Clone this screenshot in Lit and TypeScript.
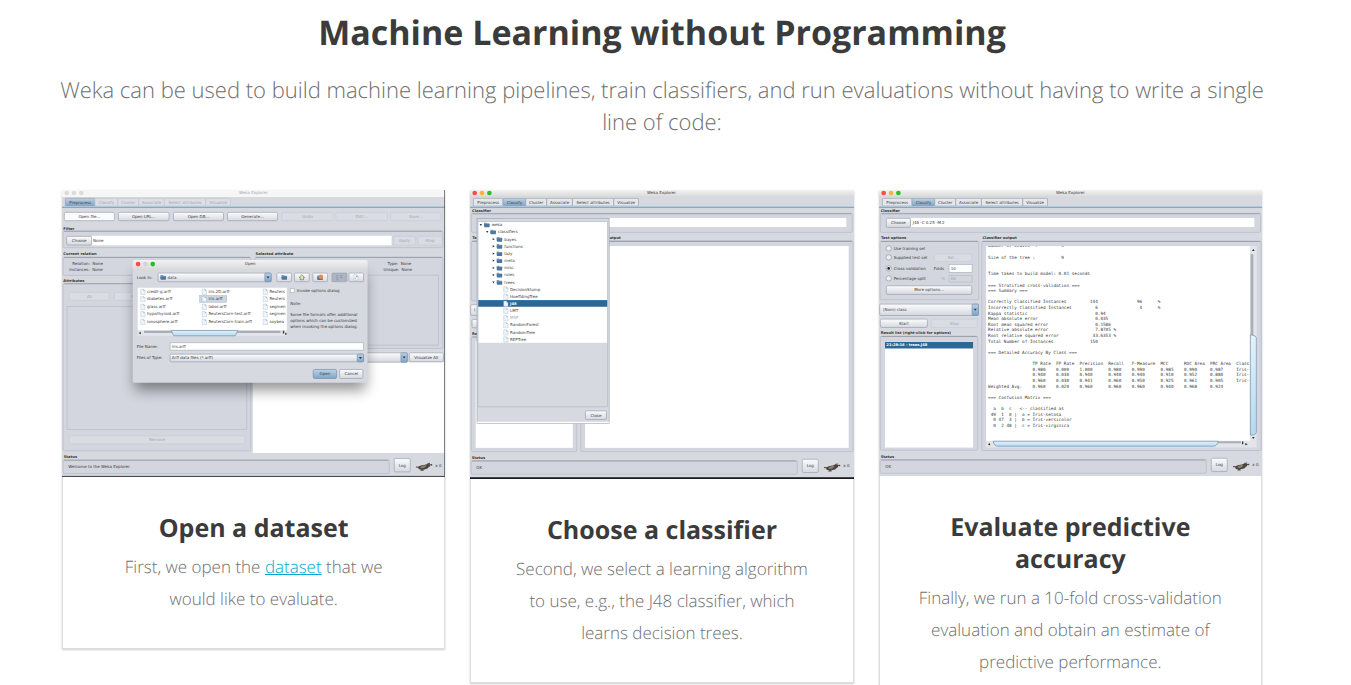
import { LitElement, html, svg, css } from "lit";
import { customElement } from "lit/decorators.js";

// Drawing helpers. y is the vertical middle of the text line.
const t = (x: number, y: number, s: string, cls = "") =>
  svg`<text class=${"t " + cls} x=${x} y=${y + 4}>${s}</text>`;

const box = (x: number, y: number, x2: number, y2: number, cls: string, r = 0) =>
  svg`<rect class=${cls} x=${x} y=${y} width=${x2 - x} height=${y2 - y} rx=${r}></rect>`;

const group = (x: number, y: number, x2: number, y2: number) => svg`
  ${box(x, y, x2, y2, "group", 4)}
  <path class="group-top" d=${`M${x + 3} ${y + 1}H${x2 - 3}`}></path>`;

const btn = (x: number, y: number, x2: number, y2: number, s: string, cls = "") => svg`
  ${box(x, y, x2, y2, "btn " + cls, 4)}
  ${t((x + x2) / 2, (y + y2) / 2, s, "mid " + (cls === "off" ? "dim" : ""))}`;

const combo = (x: number, y: number, x2: number, y2: number) => svg`
  ${box(x, y, x2, y2, "btn", 3)}
  ${box(x2 - 19, y, x2, y2, "arrow-box", 3)}
  <path class="ink" d=${`M${x2 - 14} ${(y + y2) / 2 - 3}h9l-4.5 6z`}></path>`;

const folder = (x: number, y: number) => svg`
  <path class="folder-back" d=${`M${x - 8} ${y - 7}h7l2 2h7v10h-16z`}></path>
  <path class="folder" d=${`M${x - 8} ${y - 3}h17l-1 10h-15z`}></path>`;

const file = (x: number, y: number) => svg`
  <path class="file" d=${`M${x - 6} ${y - 8}h8l5 5v11h-13z`}></path>
  <path class="file-fold" d=${`M${x + 2} ${y - 8}v5h5z`}></path>`;

const bird = (x: number, y: number) => svg`
  <g transform=${`translate(${x} ${y})`}>
    <path class="bird-line" d="M-24 0l10 1M-4 6l-4 4h7M14-6l9-1 1 3M10-9l8-2"></path>
    <ellipse class="bird" cx="-2" cy="1" rx="16" ry="7" transform="rotate(-8)"></ellipse>
    <ellipse class="bird" cx="11" cy="-4" rx="8" ry="5"></ellipse>
    <path class="bird-shade" d="M-12 1Q-2-7 8-4Q4 3-6 5z"></path>
  </g>`;

const TABS: [string, number, number][] = [
  ["Preprocess", 10, 99],
  ["Classify", 99, 167],
  ["Cluster", 167, 230],
  ["Associate", 230, 307],
  ["Select attributes", 307, 431],
  ["Visualize", 431, 505],
];

const frame = (h: number, active: string, blurred: boolean) => svg`
  <defs>
    <linearGradient id="bar" x2="0" y2="1"><stop offset="0" stop-color="#f2f2f2"></stop><stop offset="1" stop-color="#d8d8da"></stop></linearGradient>
    <linearGradient id="face" x2="0" y2="1"><stop offset="0" stop-color="#fbfcfd"></stop><stop offset="1" stop-color="#d5d8e0"></stop></linearGradient>
    <linearGradient id="blue" x2="0" y2="1"><stop offset="0" stop-color="#bcd1e4"></stop><stop offset="1" stop-color="#80a5c8"></stop></linearGradient>
    <linearGradient id="glow" x2="0" y2="1"><stop offset="0" stop-color="#e6f1f8"></stop><stop offset="1" stop-color="#b5daf0"></stop></linearGradient>
    <filter id="soft" x="-20%" y="-20%" width="140%" height="150%"><feGaussianBlur stdDeviation="20"></feGaussianBlur></filter>
  </defs>
  ${box(0, 0, 1152, h, "face")}
  ${box(0, 0, 1152, 21, blurred ? "title-off" : "title-bar")}
  ${["#fc4c48", "#f8b52d", "#28c031"].map(
    (c, i) => svg`<circle cx=${14 + 22 * i} cy="9" r="7" fill=${blurred ? "#dcdcdc" : c}></circle>`
  )}
  ${t(574, 9, "Weka Explorer", "mid " + (blurred ? "dim" : ""))}
  ${TABS.map(([s, a, b]) => svg`
    ${box(a, 25, b, 48, s === active ? "tab on" : blurred ? "tab faded" : "tab", 2)}
    ${t((a + b) / 2, 37, s, "mid " + (blurred && s !== active ? "dim" : ""))}`)}
  <rect x="0" y="50" width="1152" height="4" fill="#86a9c6"></rect>
  <rect x="0" y="48" width="1152" height="2" fill="#b4c9db"></rect>`;

const status = (y: number, s: string) => svg`
  ${t(5, y, "Status", "b")}
  ${group(3, y + 10, 981, y + 51)}
  ${t(19, y + 30, s)}
  ${btn(996, y + 6, 1044, y + 46, "Log")}
  ${bird(1085, y + 31)}
  ${t(1119, y + 26, "x 0")}`;

const FILES = [
  ["credit-g.arff", "iris.2D.arff", "Reuters"],
  ["diabetes.arff", "iris.arff", "Reuters"],
  ["glass.arff", "labor.arff", "segmen"],
  ["hypothyroid.arff", "ReutersCorn-test.arff", "segmen"],
  ["ionosphere.arff", "ReutersCorn-train.arff", "soybea"],
];

const openShot = () => svg`
  ${frame(861, "Preprocess", true)}
  ${btn(7, 67, 157, 92, "Open file...", "lit")}
  ${btn(169, 67, 321, 92, "Open URL...")}
  ${btn(334, 67, 484, 92, "Open DB...")}
  ${btn(496, 67, 646, 92, "Generate...")}
  ${btn(659, 67, 812, 92, "Undo", "off")}
  ${btn(821, 67, 975, 92, "Edit...", "off")}
  ${btn(985, 67, 1136, 92, "Save...", "off")}
  ${t(4, 115, "Filter", "b")}
  ${group(3, 123, 1142, 173)}
  ${btn(14, 139, 89, 165, "Choose")}
  ${box(90, 137, 988, 166, "white")}
  ${t(93, 152, "None")}
  ${btn(994, 139, 1059, 165, "Apply", "off")}
  ${btn(1067, 139, 1139, 165, "Stop", "off")}
  ${t(4, 192, "Current relation", "b")}
  ${group(3, 201, 566, 256)}
  ${t(31, 222, "Relation:  None")}
  ${t(22, 239, "Instances:  None")}
  ${t(580, 192, "Selected attribute", "b")}
  ${group(578, 201, 1142, 475)}
  ${t(976, 222, "Type:  None")}
  ${t(964, 239, "Unique:  None")}
  ${box(590, 255, 1129, 465, "inner")}
  ${t(4, 271, "Attributes", "b")}
  ${group(3, 280, 566, 782)}
  ${btn(22, 307, 142, 331, "All", "off")}
  ${btn(157, 307, 290, 331, "None", "off")}
  ${box(15, 349, 554, 718, "inner")}
  ${btn(22, 737, 548, 761, "Remove", "off")}
  ${box(572, 516, 1146, 788, "white")}
  ${combo(572, 488, 1035, 516)}
  ${btn(1041, 488, 1143, 515, "Visualize All")}
  ${status(799, "Welcome to the Weka Explorer")}
  ${box(0, 857, 1152, 861, "edge")}
  ${box(1146, 0, 1149, 861, "edge")}

  <rect x="218" y="250" width="692" height="350" fill="#000" opacity=".42" filter="url(#soft)"></rect>
  ${box(212, 210, 916, 578, "face", 5)}
  ${box(212, 210, 916, 240, "title-bar", 5)}
  <circle cx="228" cy="222" r="7" fill="#fc4c48"></circle>
  <circle cx="250" cy="222" r="7" fill="#d2d2d2"></circle>
  <circle cx="272" cy="222" r="7" fill="#1fc02b"></circle>
  ${t(564, 222, "Open", "mid")}
  ${t(224, 262, "Look In:")}
  ${combo(288, 249, 627, 275)}
  ${folder(303, 262)}
  ${t(316, 262, "data")}
  ${[644, 697, 752, 860].map((x) => box(x, 249, x + 44, 275, "btn", 3))}
  ${box(809, 249, 854, 275, "btn down", 3)}
  ${folder(666, 262)}
  <path class="home" d="M711 262l8-8 8 8h-3v7h-10v-7z"></path>
  ${folder(773, 263)}<circle cx="776" cy="260" r="7" fill="#e88b45"></circle>
  <path class="list-icon" d="M822 257h6M822 263h6M822 269h6M834 257h6M834 263h6"></path>
  ${file(881, 262)}
  <path class="list-icon" d="M881 260h5M881 265h-3"></path>
  ${box(227, 293, 674, 421, "white")}
  ${box(412, 316, 494, 337, "picked")}
  ${FILES.map((row, r) =>
    row.map((name, c) => {
      const x = [242, 426, 609][c];
      const y = [305, 327, 350, 372, 395][r];
      return svg`${file(x, y)}${t(x + 13, y, name)}`;
    })
  )}
  ${box(227, 421, 674, 437, "track")}
  <path class="trough" d="M246 422H655V429H246z"></path>
  <path class="thumb" d="M327 421H527L519 437H335z"></path>
  <path class="ink" d="M236 425v8l-6-4zM662 422v8h4v-8zM669 427v8l6-3z"></path>
  ${box(684, 295, 696, 307, "field")}
  ${t(704, 301, "Invoke options dialog")}
  ${t(684, 341, "Note:")}
  ${t(684, 374, "Some file formats offer additional")}
  ${t(684, 391, "options which can be customized")}
  ${t(684, 409, "when invoking the options dialog.")}
  ${t(224, 469, "File Name:")}
  ${box(324, 458, 904, 480, "field")}
  ${t(329, 469, "iris.arff")}
  ${t(224, 503, "Files of Type:")}
  ${combo(324, 492, 904, 515)}
  ${t(329, 503, "Arff data files (*.arff)")}
  ${btn(753, 538, 823, 565, "Open", "main")}
  ${btn(832, 538, 902, 565, "Cancel")}`;

const TREE: [number, string][] = [
  [0, "weka"], [1, "classifiers"], [2, "bayes"], [2, "functions"], [2, "lazy"],
  [2, "meta"], [2, "misc"], [2, "rules"], [2, "trees"], [3, "DecisionStump"],
  [3, "HoeffdingTree"], [3, "J48"], [3, "LMT"], [3, "M5P"], [3, "RandomForest"],
  [3, "RandomTree"], [3, "REPTree"],
];

const treeRow = ([level, name]: [number, string], i: number) => {
  const y = Math.round(105 + i * 21.45);
  const x = 50 + level * 19;
  const open = level < 2 || name === "trees";
  const cls = name === "J48" ? "b inv" : name === "M5P" ? "dim" : "";
  return svg`
    ${level < 3
      ? svg`<path class="ink" d=${open ? `M${x - 21} ${y - 3}h7l-3.5 6z` : `M${x - 20} ${y - 4}v7l6-3.5z`}></path>`
      : ""}
    ${level < 3 ? folder(x, y) : file(x, y)}
    ${t(x + (level < 3 ? 15 : 13), y, name, cls)}`;
};

const chooseShot = () => svg`
  ${frame(867, "Classify", false)}
  ${t(6, 61, "Classifier", "b")}
  ${group(4, 70, 1146, 127)}
  ${box(97, 84, 1128, 111, "white")}
  ${t(7, 144, "Te", "b")}
  ${group(4, 153, 320, 332)}
  ${combo(2, 344, 318, 376)}
  ${t(12, 360, "(")}
  ${box(6, 388, 145, 413, "btn", 4)}
  ${t(6, 430, "Re", "b")}
  ${group(4, 440, 320, 784)}
  ${box(17, 453, 308, 773, "white")}
  ${t(418, 144, "utput", "b")}
  ${group(332, 153, 1148, 784)}
  ${box(345, 168, 1135, 773, "white")}
  ${status(801, "OK")}
  ${box(0, 861, 1152, 867, "edge deep")}
  ${box(21, 85, 417, 700, "popup")}
  ${box(24, 95, 412, 458, "white")}
  ${box(24, 330, 412, 350, "selected")}
  ${TREE.map(treeRow)}
  ${box(24, 95, 412, 650, "inner")}
  ${btn(346, 662, 409, 688, "Close")}
  ${box(21, 695, 417, 699, "white")}`;

const REPORT = [
  "Number of Leaves  :         5",
  "",
  "Size of the tree :          9",
  "",
  "",
  "Time taken to build model: 0.01 seconds",
  "",
  "=== Stratified cross-validation ===",
  "=== Summary ===",
  "",
  "Correctly Classified Instances         144               96      %",
  "Incorrectly Classified Instances         6                4      %",
  "Kappa statistic                          0.94",
  "Mean absolute error                      0.035",
  "Root mean squared error                  0.1586",
  "Relative absolute error                  7.8705 %",
  "Root relative squared error             33.6353 %",
  "Total Number of Instances              150",
  "",
  "=== Detailed Accuracy By Class ===",
  "",
  "                 TP Rate  FP Rate  Precision  Recall   F-Measure  MCC      ROC Area  PRC Area  Class",
  "                 0.980    0.000    1.000      0.980    0.990      0.985    0.990     0.987     Iris-",
  "                 0.940    0.030    0.940      0.940    0.940      0.910    0.952     0.880     Iris-",
  "                 0.960    0.030    0.941      0.960    0.950      0.925    0.961     0.905     Iris-",
  "Weighted Avg.    0.960    0.020    0.960      0.960    0.960      0.940    0.968     0.924",
  "",
  "=== Confusion Matrix ===",
  "",
  "  a  b  c   <-- classified as",
  " 49  1  0 |  a = Iris-setosa",
  "  0 47  3 |  b = Iris-versicolor",
  "  0  2 48 |  c = Iris-virginica",
];

const radio = (y: number, s: string, on = false) => svg`
  <circle class="radio" cx="29" cy=${y} r="8"></circle>
  ${on ? svg`<circle cx="29" cy=${y} r="4" fill="#222"></circle>` : ""}
  ${t(44, y, s)}`;

const resultShot = () => svg`
  ${frame(858, "Classify", false)}
  ${t(5, 61, "Classifier", "b")}
  ${group(4, 70, 1144, 127)}
  ${btn(22, 85, 94, 112, "Choose")}
  ${box(96, 84, 1125, 111, "white")}
  ${t(101, 98, "J48 -C 0.25 -M 2")}
  ${t(6, 143, "Test options", "b")}
  ${group(3, 153, 299, 329)}
  ${radio(175, "Use training set")}
  ${radio(202, "Supplied test set")}
  ${radio(235, "Cross-validation", true)}
  ${radio(265, "Percentage split")}
  ${btn(166, 192, 277, 214, "Set...", "off")}
  ${t(164, 235, "Folds")}
  ${box(210, 223, 279, 247, "field")}
  ${t(215, 235, "10")}
  ${t(187, 266, "%", "dim")}
  ${box(210, 256, 279, 276, "inner")}
  ${t(215, 266, "66", "dim")}
  ${btn(22, 287, 278, 313, "More options...")}
  ${combo(2, 342, 298, 376)}
  ${t(12, 358, "(Nom) class")}
  ${btn(4, 387, 145, 412, "Start")}
  ${btn(156, 387, 295, 412, "Stop", "off")}
  ${t(5, 428, "Result list (right-click for options)", "b")}
  ${group(4, 438, 296, 780)}
  ${box(18, 453, 282, 772, "white")}
  ${box(18, 455, 282, 475, "selected")}
  ${t(22, 465, "21:28:16 - trees.J48", "b inv")}
  ${t(310, 143, "Classifier output", "b")}
  ${group(308, 153, 1146, 781)}
  ${box(321, 168, 1113, 752, "white")}
  <svg x="321" y="168" width="792" height="584" viewBox="321 168 792 584">
    ${REPORT.map((line, i) => t(327, Math.round(168 + i * 16.8), line, "mono"))}
  </svg>
  ${box(1113, 168, 1132, 752, "track")}
  <path class="trough" d="M1114 192H1122V734H1114z"></path>
  <path class="thumb" d="M1113 434Q1131 436 1131 444V726Q1131 734 1113 735z"></path>
  ${box(321, 752, 1132, 772, "track")}
  <path class="trough" d="M342 753H1085V759H342z"></path>
  <path class="thumb" d="M342 753H1017Q1013 768 1003 768H356Q346 768 342 753z"></path>
  <path class="ink" d="M333 758v8l-7-4zM1088 754v8h4v-8zM1098 758v8l7-4zM1118 183h8l-4-6zM1118 740h8l-4 6z"></path>
  ${status(798, "OK")}`;

@customElement("app-root")
export class AppRoot extends LitElement {
  static styles = css`
    :host {
      display: block;
      font-family: "Open Sans", "Noto Sans", sans-serif;
      font-weight: 300;
      color: #6e6e6e;
      background: #fff;
      text-rendering: geometricPrecision;
    }
    main { padding: 6px 89px 0 62px; overflow: hidden; }
    h1 {
      margin: 0;
      font-size: 34px;
      line-height: 52px;
      font-weight: 700;
      text-align: center;
      color: #3b3b3b;
    }
    .lead {
      margin: 16px -8px 52px;
      font-size: 22px;
      line-height: 32px;
      text-align: center;
    }
    .cards {
      display: grid;
      grid-template-columns: repeat(3, minmax(0, 1fr));
      gap: 25px;
      align-items: start;
    }
    .card { box-shadow: 0 1px 2px rgba(0, 0, 0, 0.2); }
    .body {
      border: 1px solid #ddd;
      border-top: 0;
      padding: 35px 38px 33px;
      text-align: center;
    }
    h2 {
      margin: 0 0 7px;
      font-size: 25px;
      line-height: 32px;
      font-weight: 700;
      color: #3b3b3b;
    }
    .body p { margin: 0; font-size: 17px; line-height: 32px; }
    a { color: #06a7cc; text-decoration: underline; }

    .shot { display: block; width: 100%; height: auto; }
    .t { font: 400 12px "DejaVu Sans", sans-serif; fill: #3a3a3a; white-space: pre; }
    .b { font-size: 11px; font-weight: 700; fill: #333; }
    .mid { text-anchor: middle; }
    .dim { fill: #a4a8b0; }
    .inv { fill: #fff; }
    .mono { font: 400 13px "DejaVu Sans Mono", monospace; }
    .face { fill: #d6d9e0; }
    .title-off { fill: #f6f6f6; }
    .title-bar { fill: url(#bar); }
    .white { fill: #fff; }
    .edge { fill: #4c4c52; }
    .deep { fill: #191921; }
    .group { fill: #d3d6de; stroke: #b4b8c2; stroke-width: 2; }
    .group-top { stroke: #9da2ad; stroke-width: 3; fill: none; }
    .inner { fill: none; stroke: #b3bbc9; stroke-width: 2; }
    .field { fill: #fff; stroke: #aab0bb; stroke-width: 2; }
    .btn { fill: url(#face); stroke: #9a9fab; stroke-width: 2; }
    .lit { fill: #fbfbfd; }
    .off { fill: #d9dce3; stroke: #c8ccd5; }
    .main, .arrow-box { fill: url(#blue); stroke: #7090b0; stroke-width: 2; }
    .down { fill: #aeb5c2; }
    .tab { fill: #e4e7ec; stroke: #9aa1ae; stroke-width: 2; }
    .on { fill: url(#blue); }
    .faded { fill: #dbdee5; stroke: #c3c8d1; }
    .ink { fill: #333; }
    .folder-back { fill: #7f9bb8; }
    .folder { fill: #4d779f; }
    .file { fill: #eef4fa; stroke: #9aafc4; stroke-width: 1; }
    .file-fold { fill: #9aafc4; }
    .picked { fill: #ccd6e3; stroke: #9aa6b6; stroke-width: 1; }
    .home { fill: #e9e4ae; stroke: #6b7460; stroke-width: 2; }
    .list-icon { fill: none; stroke: #6d88a6; stroke-width: 2; }
    .track { fill: #e3e5ea; }
    .trough { fill: #a9aeb9; }
    .thumb { fill: url(#glow); stroke: #6c8fae; stroke-width: 2; }
    .popup { fill: #d6d9e0; stroke: #9fa4af; stroke-width: 2; }
    .selected { fill: #2b6896; }
    .radio { fill: #f0f1f4; stroke: #8c919c; stroke-width: 2; }
    .bird { fill: #4a443c; }
    .bird-shade { fill: #8a8275; }
    .bird-line { fill: none; stroke: #4f493f; stroke-width: 3; }
  `;

  render() {
    return html`
      <main>
        <h1>Machine Learning without Programming</h1>
        <p class="lead">
          Weka can be used to build machine learning pipelines, train classifiers, and run evaluations without having to
          write a single line of code:
        </p>
        <section class="cards">
          <article class="card">
            <svg class="shot" viewBox="0 0 1149 861" role="img" aria-label="Open dialog">${openShot()}</svg>
            <div class="body">
              <h2>Open a dataset</h2>
              <p>First, we open the <a href="#dataset">dataset</a> that we would like to evaluate.</p>
            </div>
          </article>
          <article class="card">
            <svg class="shot" viewBox="0 0 1149 867" role="img" aria-label="Classifier tree">${chooseShot()}</svg>
            <div class="body">
              <h2>Choose a classifier</h2>
              <p>Second, we select a learning algorithm to use, e.g., the J48 classifier, which learns decision trees.</p>
            </div>
          </article>
          <article class="card">
            <svg class="shot" viewBox="0 0 1149 858" role="img" aria-label="Evaluation output">${resultShot()}</svg>
            <div class="body">
              <h2>Evaluate predictive accuracy</h2>
              <p>Finally, we run a 10-fold cross-validation evaluation and obtain an estimate of predictive performance.</p>
            </div>
          </article>
        </section>
      </main>
    `;
  }
}
